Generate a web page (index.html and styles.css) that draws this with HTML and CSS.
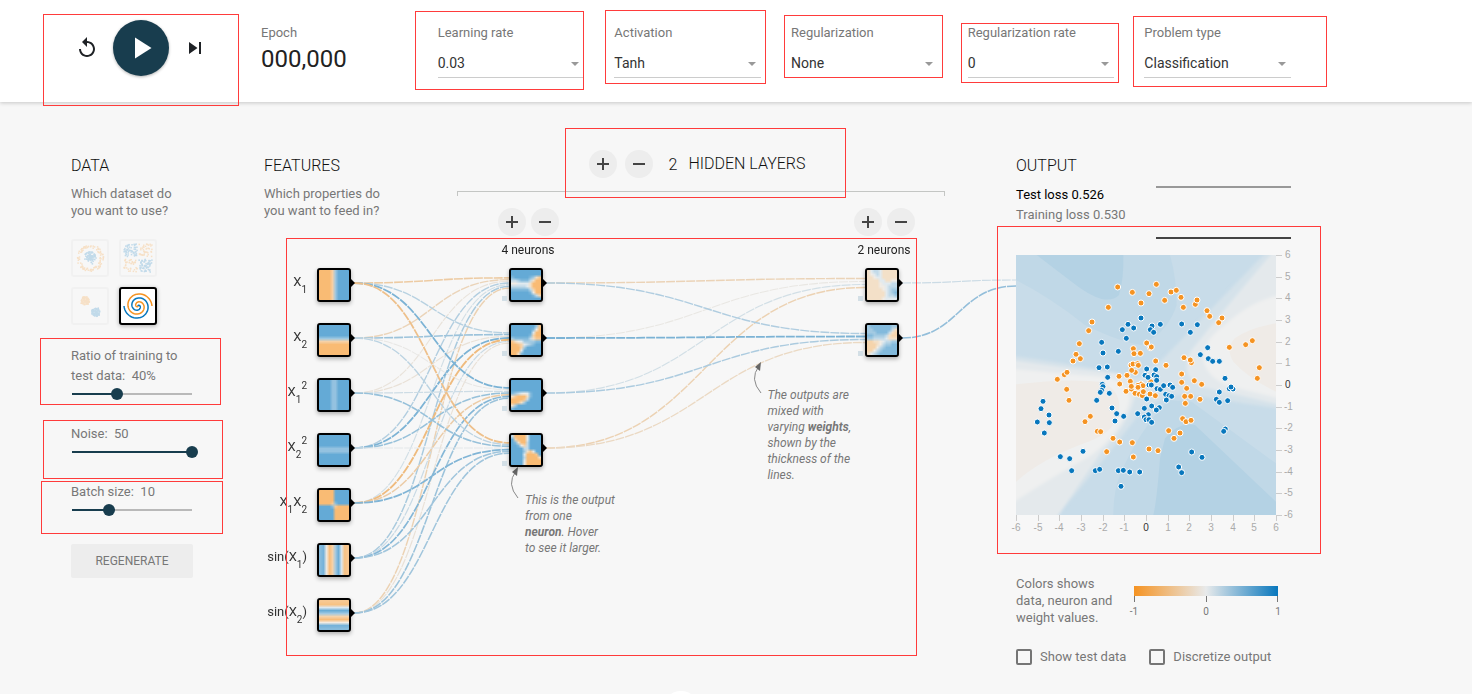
FILE: index.html
```html
<!DOCTYPE html>
<html lang="en">
<head>
    <meta charset="UTF-8">
    <meta name="viewport" content="width=device-width, initial-scale=1.0">
    <title>Neural Network Playground</title>
    <link rel="stylesheet" href="styles.css">
</head>
<body>
    <header class="top-bar">
        <div class="top-inner">
            <div class="controls">
                <button class="icon-btn" aria-label="Reset">
                    <svg width="24" height="24" viewBox="0 0 24 24"><path d="M12 5V1L7 6l5 5V7c3.31 0 6 2.69 6 6s-2.69 6-6 6-6-2.69-6-6H4c0 4.42 3.58 8 8 8s8-3.58 8-8-3.58-8-8-8z"/></svg>
                </button>
                <button class="play-btn" aria-label="Run">
                    <svg width="36" height="36" viewBox="0 0 24 24"><path d="M8 5v14l11-7z"/></svg>
                </button>
                <button class="icon-btn" aria-label="Step">
                    <svg width="24" height="24" viewBox="0 0 24 24"><path d="M6 18l8.5-6L6 6v12zM16 6v12h2V6h-2z"/></svg>
                </button>
                <span class="mark mark-controls"></span>
            </div>
            <div class="field">
                <span class="label">Epoch</span>
                <span class="epoch">000,000</span>
            </div>
            <div class="field">
                <label class="label" for="learningRate">Learning rate</label>
                <div class="select">
                    <select id="learningRate"><option>0.03</option><option>0.1</option><option>0.3</option></select>
                </div>
                <span class="mark mark-rate"></span>
            </div>
            <div class="field">
                <label class="label" for="activation">Activation</label>
                <div class="select">
                    <select id="activation"><option>Tanh</option><option>ReLU</option><option>Sigmoid</option></select>
                </div>
                <span class="mark mark-activation"></span>
            </div>
            <div class="field">
                <label class="label" for="regularization">Regularization</label>
                <div class="select">
                    <select id="regularization"><option>None</option><option>L1</option><option>L2</option></select>
                </div>
                <span class="mark mark-reg"></span>
            </div>
            <div class="field">
                <label class="label" for="regRate">Regularization rate</label>
                <div class="select">
                    <select id="regRate"><option>0</option><option>0.001</option><option>0.01</option></select>
                </div>
                <span class="mark mark-reg-rate"></span>
            </div>
            <div class="field">
                <label class="label" for="problem">Problem type</label>
                <div class="select">
                    <select id="problem"><option>Classification</option><option>Regression</option></select>
                </div>
                <span class="mark mark-problem"></span>
            </div>
        </div>
    </header>

    <main class="main">
        <section class="data">
            <h2>Data</h2>
            <p>Which dataset do you want to use?</p>
            <div class="datasets">
                <button class="dataset" aria-label="Circle"><svg id="setCircle" viewBox="0 0 34 34"></svg></button>
                <button class="dataset" aria-label="Exclusive or"><svg id="setXor" viewBox="0 0 34 34"></svg></button>
                <button class="dataset" aria-label="Gaussian"><svg id="setGauss" viewBox="0 0 34 34"></svg></button>
                <button class="dataset selected" aria-label="Spiral"><svg id="setSpiral" viewBox="0 0 34 34"></svg></button>
            </div>
            <div class="slider slider-ratio">
                <label for="ratio">Ratio of training to test data:&nbsp; 40%</label>
                <input type="range" id="ratio" min="10" max="90" step="10" value="40">
                <span class="mark mark-ratio"></span>
            </div>
            <div class="slider">
                <label for="noise">Noise:&nbsp; 50</label>
                <input type="range" id="noise" min="0" max="50" step="5" value="50">
                <span class="mark mark-noise"></span>
            </div>
            <div class="slider">
                <label for="batch">Batch size:&nbsp; 10</label>
                <input type="range" id="batch" min="1" max="30" value="10">
                <span class="mark mark-batch"></span>
            </div>
            <button class="regenerate">Regenerate</button>
        </section>

        <section class="model">
            <div class="model-head">
                <div class="features">
                    <h2>Features</h2>
                    <p>Which properties do you want to feed in?</p>
                </div>
                <div class="hidden-layers">
                    <div class="layers-title">
                        <button class="round-btn" aria-label="Add layer"><svg viewBox="0 0 28 28"><path d="M14 8v12M8 14h12"/></svg></button>
                        <button class="round-btn" aria-label="Remove layer"><svg viewBox="0 0 28 28"><path d="M8 14h12"/></svg></button>
                        <span class="layers-count">2</span>
                        <h2>Hidden layers</h2>
                        <span class="mark mark-layers"></span>
                    </div>
                    <div class="bracket"></div>
                </div>
            </div>
            <div class="network" id="network">
                <svg class="links" id="links"></svg>
                <div class="callout callout-neuron">
                    <svg width="16" height="34" viewBox="0 0 16 34"><path d="M9 32Q-3 18 7 5"/><path class="tip" d="M9 1L3 6l5 4z"/></svg>
                    This is the output<br>from one<br><b>neuron</b>. Hover<br>to see it larger.
                </div>
                <div class="callout callout-weight">
                    <svg width="16" height="34" viewBox="0 0 16 34"><path d="M9 32Q-3 18 7 5"/><path class="tip" d="M9 1L3 6l5 4z"/></svg>
                    The outputs are<br>mixed with<br>varying <b>weights</b>,<br>shown by the<br>thickness of the<br>lines.
                </div>
                <span class="mark mark-network"></span>
            </div>
        </section>

        <section class="output">
            <h2>Output</h2>
            <div class="loss">
                <div class="loss-text">
                    <div>Test loss 0.526</div>
                    <div class="train">Training loss 0.530</div>
                </div>
                <div class="loss-chart"></div>
            </div>
            <div class="plot">
                <svg id="plot" width="275" height="282" viewBox="0 0 275 282">
                    <svg id="heat" width="260" height="260" viewBox="33 30 780 780">
                        <defs>
                            <filter id="soft" x="-5%" y="-5%" width="110%" height="110%"><feGaussianBlur stdDeviation="5"/></filter>
                        </defs>
                        <rect x="33" y="30" width="780" height="780" fill="#c8dce9"/>
                        <path fill="#c0d8e7" d="M33 30H495Q515 100 515 180Q490 260 410 300Q340 290 240 240Q140 160 33 105z"/>
                        <path fill="#b4d2e4" d="M95 30H355Q357 100 342 150Q325 168 290 162Q250 150 200 110z"/>
                        <path fill="#c0d8e7" d="M325 810Q325 740 345 690Q400 560 490 465L560 470L813 655V810z"/>
                        <path fill="#b4d2e4" d="M445 810Q455 770 465 640L480 580Q520 530 570 540L813 770V810z"/>
                        <g filter="url(#soft)">
                            <path fill="#d5e2ea" d="M785 20L470 345L400 400Q300 370 20 332V820H148Q280 670 400 510Q480 440 560 450Q680 470 830 492V20z"/>
                            <path fill="#e4e9ec" d="M805 20Q660 190 560 315Q520 390 590 425Q700 450 830 480V20z"/>
                            <path fill="#eff0f0" d="M830 150Q740 165 660 240Q590 290 595 345Q610 410 700 430L830 462z"/>
                            <path fill="#e4e9ec" d="M20 345Q200 372 330 385Q400 410 390 450Q370 540 290 620Q220 720 155 820H20z"/>
                            <path fill="#eff0f0" d="M20 372Q200 388 310 398Q380 420 372 470Q350 560 260 630Q150 690 20 775z"/>
                        </g>
                        <path fill="#efebe7" d="M813 235Q730 250 690 280Q660 310 685 350Q730 400 813 440z"/>
                        <path fill="#efebe7" d="M33 418Q200 398 290 412Q345 435 343 490Q335 560 250 590Q110 640 33 710z"/>
                    </svg>
                </svg>
                <span class="mark mark-plot"></span>
            </div>
            <div class="legend">
                <p>Colors shows data, neuron and weight values.</p>
                <div class="scale">
                    <div class="scale-bar"></div>
                    <div class="scale-ticks"><i></i><i></i><i></i></div>
                    <div class="scale-labels"><span>-1</span><span>0</span><span>1</span></div>
                </div>
            </div>
            <div class="options">
                <label><input type="checkbox">Show test data</label>
                <label><input type="checkbox">Discretize output</label>
            </div>
        </section>
        <button class="more" aria-label="Read more"></button>
    </main>

    <script src="script.js"></script>
</body>
</html>
```
FILE: styles.css
```css
* {
    box-sizing: border-box;
}

body {
    margin: 0;
    min-height: 100vh;
    display: flex;
    flex-direction: column;
    font-family: Roboto, "Liberation Sans", sans-serif;
    font-size: 13px;
    line-height: 17px;
    color: #777;
    background: #f7f7f7;
}

h2, p {
    margin: 0;
}

h2 {
    font-size: 16px;
    font-weight: 300;
    line-height: 20px;
    color: #111;
    text-transform: uppercase;
}

button, select, input {
    font-family: inherit;
    margin: 0;
}

button {
    border: none;
    padding: 0;
    cursor: pointer;
}

button svg {
    display: block;
}

/* red outlines drawn over the page */
.mark {
    position: absolute;
    z-index: 5;
    border: 1px solid #ff3b3b;
    pointer-events: none;
}

.mark-controls { left: -28px; top: -6px; width: 196px; height: 92px; }
.mark-rate { left: -23px; top: -9px; width: 169px; height: 79px; }
.mark-activation { left: -9px; top: -10px; width: 161px; height: 74px; }
.mark-reg { left: -7px; top: -5px; width: 159px; height: 63px; }
.mark-reg-rate { left: -7px; top: 3px; width: 158px; height: 60px; }
.mark-problem { left: -11px; top: -4px; width: 194px; height: 71px; }
.mark-ratio { left: -31px; top: -8px; width: 181px; height: 67px; }
.mark-noise { left: -28px; top: -4px; width: 180px; height: 59px; }
.mark-batch { left: -30px; top: -1px; width: 182px; height: 53px; }
.mark-layers { left: 108px; top: -28px; width: 281px; height: 70px; }
.mark-network { left: 22px; top: 30px; width: 631px; height: 418px; }
.mark-plot { left: -19px; top: -29px; width: 324px; height: 328px; }

/* top bar */
.top-bar {
    position: relative;
    z-index: 1;
    height: 102px;
    padding: 20px 181px 0 71px;
    background: #fff;
    box-shadow: 0 1px 4px rgba(0, 0, 0, 0.2);
}

.top-inner {
    display: flex;
    gap: 30px;
}

.controls {
    position: relative;
    flex: none;
    width: 160px;
    height: 56px;
    padding-left: 4px;
    display: flex;
    align-items: center;
    gap: 14px;
}

.icon-btn {
    background: none;
    fill: #1f2226;
}

.play-btn {
    width: 56px;
    height: 56px;
    padding: 10px;
    border-radius: 50%;
    background: #183d4e;
    fill: #fff;
    box-shadow: 0 1px 3px rgba(0, 0, 0, 0.3);
}

.field {
    position: relative;
    flex: 1;
    min-width: 0;
    padding-top: 5px;
}

.label {
    display: block;
    line-height: 16px;
}

.epoch {
    display: block;
    margin-top: 3px;
    font-size: 24px;
    line-height: 30px;
    color: #222;
}

.select {
    position: relative;
    margin-top: 7px;
}

.select select {
    display: block;
    width: 100%;
    height: 30px;
    padding: 0;
    border: none;
    border-bottom: 1px solid #ccc;
    background: none;
    appearance: none;
    font-size: 14px;
    color: #333;
}

.select::after {
    content: "";
    position: absolute;
    right: 5px;
    top: 14px;
    border: 4px solid transparent;
    border-top-color: #999;
}

/* columns */
.main {
    position: relative;
    flex: 1;
    display: grid;
    grid-template-columns: 122px minmax(0, 1fr) 275px;
    gap: 71px;
    padding: 54px 181px 0 71px;
    overflow: hidden;
}

.data h2, .features h2, .output h2 {
    margin-bottom: 9px;
}

.data p {
    width: 110px;
}

.datasets {
    display: grid;
    grid-template-columns: 38px 38px;
    gap: 10px;
    margin-top: 20px;
}

.dataset {
    width: 38px;
    height: 38px;
    border: 2px solid #ddd;
    border-radius: 3px;
    background: none;
    opacity: 0.22;
}

.dataset.selected {
    border-color: #000;
    background: #fff;
    opacity: 1;
    box-shadow: 0 1px 4px rgba(0, 0, 0, 0.3);
}

.slider {
    position: relative;
    height: 58px;
    line-height: 20px;
}

.slider-ratio {
    height: 78px;
    margin-top: 21px;
}

.slider label {
    display: block;
    width: 122px;
}

.slider input {
    display: block;
    width: 132px;
    height: 16px;
    margin-left: -5px;
    appearance: none;
    background: linear-gradient(#183d4e, #183d4e) 6px 7px / calc(var(--fill) * 120px) 2px no-repeat,
        linear-gradient(#b9b9b9, #b9b9b9) 6px 7px / 120px 2px no-repeat;
}

.slider input::-webkit-slider-thumb {
    appearance: none;
    width: 12px;
    height: 12px;
    border-radius: 50%;
    background: #183d4e;
}

.regenerate {
    width: 122px;
    height: 34px;
    margin-top: 4px;
    border-radius: 2px;
    background: #ededed;
    color: #777;
    font-size: 12px;
    text-transform: uppercase;
}

/* network */
.model-head {
    display: flex;
    height: 52px;
}

.features {
    flex: none;
    width: 193px;
}

.features p {
    width: 130px;
}

.hidden-layers {
    flex: 1;
}

.layers-title {
    position: relative;
    display: flex;
    justify-content: center;
    align-items: center;
    gap: 8px;
    height: 16px;
    padding-right: 8px;
}

.layers-count {
    margin: 0 3px 0 8px;
    font-size: 16px;
    font-weight: 300;
    color: #111;
}

.round-btn {
    width: 28px;
    height: 28px;
    border-radius: 50%;
    background: #ededed;
    stroke: #444;
    stroke-width: 2;
}

.bracket {
    height: 5px;
    margin-top: 19px;
    border: 1px solid #c4c6c4;
    border-bottom: none;
}

.network {
    position: relative;
    height: 448px;
}

.links {
    position: absolute;
    left: 0;
    top: 0;
    width: 100%;
    height: 100%;
    overflow: visible;
    fill: none;
}

.node {
    position: absolute;
    width: 34px;
    height: 34px;
    border: 2px solid #000;
    border-radius: 3px;
    background: #fff;
    box-shadow: 0 2px 4px rgba(0, 0, 0, 0.3);
}

.node canvas {
    display: block;
    width: 30px;
    height: 30px;
}

.node::after {
    content: "";
    position: absolute;
    left: 31px;
    top: 8px;
    border: 5px solid transparent;
    border-left-color: #000;
    border-right: none;
}

.bias {
    position: absolute;
    width: 5px;
    height: 5px;
    background: #d3dfe6;
}

.node-label {
    position: absolute;
    width: 60px;
    display: flex;
    justify-content: flex-end;
    font-size: 13px;
    line-height: 16px;
    color: #333;
    white-space: pre;
}

.node-label sub, .node-label sup {
    font-size: 10px;
    line-height: 16px;
    vertical-align: baseline;
}

.node-label sub {
    padding-top: 8px;
}

.node-label sup {
    margin-top: -6px;
}

.layer-head {
    position: absolute;
    width: 80px;
    display: flex;
    flex-wrap: wrap;
    justify-content: center;
    gap: 5px;
    font-size: 12px;
    text-align: center;
    color: #222;
}

.layer-head span {
    width: 100%;
    line-height: 18px;
}

.callout {
    position: absolute;
    font-size: 12px;
    font-style: italic;
    line-height: 16px;
    white-space: nowrap;
}

.callout svg {
    position: absolute;
    left: -16px;
    top: -26px;
    fill: none;
    stroke: #888;
}

.callout .tip {
    fill: #666;
    stroke: none;
}

.callout-neuron { left: 261px; top: 284px; }
.callout-weight { right: 94px; top: 179px; }

/* output */
.loss {
    display: flex;
    justify-content: space-between;
    height: 70px;
}

.loss-text {
    line-height: 20px;
    color: #000;
}

.loss-text .train {
    color: #777;
}

.loss-chart {
    width: 135px;
    height: 53px;
    margin-top: 1px;
    border-top: 2px solid #999;
    border-bottom: 2px solid #444;
}

.plot {
    position: relative;
}

.plot > svg {
    display: block;
    overflow: visible;
}

.plot text {
    font-family: "Liberation Sans", sans-serif;
    font-size: 10px;
    fill: #aaa;
}

.plot .zero {
    fill: #333;
}

.plot line {
    stroke: #ccc;
}

.legend {
    display: flex;
    justify-content: space-between;
    margin-top: 38px;
    padding-right: 8px;
}

.legend p {
    width: 102px;
}

.scale {
    width: 154px;
    margin-top: 11px;
}

.scale-bar {
    height: 10px;
    margin: 0 5px;
    background: linear-gradient(to right, #f59322, #e8eaeb, #0877bd);
}

.scale-ticks {
    display: flex;
    justify-content: space-between;
    height: 6px;
    margin: 0 5px;
}

.scale-ticks i {
    width: 1px;
    background: #777;
}

.scale-labels {
    display: flex;
    justify-content: space-between;
    font-size: 10px;
    line-height: 20px;
}

.scale-labels span {
    width: 10px;
    text-align: center;
}

.options {
    display: flex;
    gap: 23px;
    margin-top: 22px;
}

.options label {
    display: flex;
    align-items: center;
    gap: 8px;
    white-space: nowrap;
}

.options input {
    appearance: none;
    width: 16px;
    height: 16px;
    border: 2px solid #757575;
    border-radius: 2px;
}

.more {
    position: absolute;
    left: calc(50% - 73px);
    top: 589px;
    width: 36px;
    height: 36px;
    border-radius: 50%;
    background: #fff;
}
```
FILE: script.js
```js
const SVG = 'http://www.w3.org/2000/svg';

function add(parent, name, attrs, text) {
    const el = document.createElementNS(SVG, name);
    for (const key in attrs) el.setAttribute(key, attrs[key]);
    if (text !== undefined) el.textContent = text;
    parent.appendChild(el);
    return el;
}

// orange (-1) -> grey (0) -> blue (1)
function color(v) {
    v = Math.max(-1, Math.min(1, v));
    const end = v < 0 ? [245, 147, 34] : [8, 119, 189];
    const mid = [232, 234, 235];
    return mid.map((c, i) => Math.round(c + (end[i] - c) * Math.abs(v)));
}

// sliders
document.querySelectorAll('.slider input').forEach(input => {
    const update = () => input.style.setProperty('--fill', (input.value - input.min) / (input.max - input.min));
    input.addEventListener('input', update);
    update();
});

// dataset thumbnails
let seed = 7;
function rand() {
    seed = (seed * 16807) % 2147483647;
    return seed / 2147483647;
}

function dot(id, x, y, fill) {
    add(document.getElementById(id), 'rect', { x: x - 0.7, y: y - 0.7, width: 1.5, height: 1.5, fill: fill });
}

const BLUE = '#0877bd';
const ORANGE = '#f59322';

for (let i = 0; i < 100; i++) {
    let a = rand() * 2 * Math.PI;
    let r = rand() * 6.5;
    dot('setCircle', 17 + r * Math.cos(a), 17 + r * Math.sin(a), BLUE);
    a = rand() * 2 * Math.PI;
    r = 10 + rand() * 3.5;
    dot('setCircle', 17 + r * Math.cos(a), 17 + r * Math.sin(a), ORANGE);
}
for (let i = 0; i < 200; i++) {
    const x = rand() * 26 - 13;
    const y = rand() * 26 - 13;
    dot('setXor', 17 + x + Math.sign(x), 17 + y + Math.sign(y), x * y > 0 ? BLUE : ORANGE);
}
for (let i = 0; i < 90; i++) {
    const a = rand() * 2 * Math.PI;
    const r = Math.sqrt(rand()) * 4.5;
    dot('setGauss', 12 + r * Math.cos(a), 12 + r * Math.sin(a), ORANGE);
    dot('setGauss', 23 + r * Math.sin(a), 23 + r * Math.cos(a), BLUE);
}
[[0, BLUE], [Math.PI, ORANGE]].forEach(([delta, stroke]) => {
    let d = 'M17 17';
    for (let i = 1; i <= 80; i++) {
        const r = i / 80 * 14;
        const t = 1.75 * i / 80 * 2 * Math.PI + delta;
        d += 'L' + (17 + r * Math.sin(t)).toFixed(2) + ' ' + (17 - r * Math.cos(t)).toFixed(2);
    }
    add(document.getElementById('setSpiral'), 'path', { d: d, fill: 'none', stroke: stroke, 'stroke-width': 1.5 });
});

// network
const network = document.getElementById('network');
const links = document.getElementById('links');

const features = [
    { label: 'X<sub>1</sub>', f: (x, y) => x },
    { label: 'X<sub>2</sub>', f: (x, y) => y },
    { label: 'X<sub>1</sub><sup>2</sup>', f: (x, y) => 0.3 + x * x },
    { label: 'X<sub>2</sub><sup>2</sup>', f: (x, y) => 0.3 + y * y },
    { label: 'X<sub>1</sub>X<sub>2</sub>', f: (x, y) => x * y * 2 },
    { label: 'sin(X<sub>1</sub>)', f: (x, y) => Math.sin(x) },
    { label: 'sin(X<sub>2</sub>)', f: (x, y) => Math.sin(y) }
];

// neuron outputs sampled on a 10x10 grid, 0 = -1 and 9 = 1
const hidden = [
    [
        '9999999999 9999999999 8999998731 6678886300 4455553000 6666653000 8888886200 9999998400 9999999862 9999999999',
        '9999999971 9999999840 9999999500 9999998200 7888886311 1345777788 0012567899 0002799999 0005999999 0038999999',
        '9999999999 9999999999 9999999999 9999999999 8765458999 3100038999 0000169999 0013799999 3799999999 8999999999',
        '6000059999 9200059999 9830069999 9984269999 9999669999 9999731599 9999500019 9999600003 9999500000 9999400000'
    ],
    [
        '3566533333 3456533333 3345533333 3333553344 3333455566 3333445666 3333345677 3333335678 3333335667 3333345555',
        '7888888877 7788888863 7778888632 8877776322 7766665333 2233456677 2223467788 2224678888 2246788888 3567888888'
    ]
];

// weights[layer][target][source]
const weights = [
    [
        [-0.36, -0.25, -0.08, 0.24, 0.1, 0.28, -0.28],
        [0.22, 0.34, -0.1, 0.48, -0.54, 0.14, -0.1],
        [0.48, -0.03, 0.12, 0.36, -0.34, 0.44, 0.34],
        [-0.48, 0.2, 0.36, 0.02, 0.46, 0.32, 0.32]
    ],
    [
        [-0.26, -0.04, 0.1, -0.28],
        [0.25, 0.48, 0.27, -0.2]
    ],
    [
        [0.13, 0.38]
    ]
];

function heatmap(size, value) {
    const canvas = document.createElement('canvas');
    canvas.width = canvas.height = size;
    const ctx = canvas.getContext('2d');
    const image = ctx.createImageData(size, size);
    for (let y = 0; y < size; y++) {
        for (let x = 0; x < size; x++) {
            image.data.set([...color(value(x, y)), 160], (y * size + x) * 4);
        }
    }
    ctx.putImageData(image, 0, 0);
    return canvas;
}

function place(className, x, y, html) {
    const el = document.createElement('div');
    el.className = className;
    el.style.left = x + 'px';
    el.style.top = y + 'px';
    el.innerHTML = html || '';
    network.appendChild(el);
    return el;
}

function link(x0, y0, x1, y1, w) {
    const mid = (x0 + x1) / 2;
    add(links, 'path', {
        d: `M${x0} ${y0}C${mid} ${y0} ${mid} ${y1} ${x1} ${y1}`,
        stroke: `rgb(${color(w)})`,
        'stroke-width': 1 + 1.6 * Math.abs(w),
        'stroke-dasharray': '9 1'
    });
}

const width = network.clientWidth;
const layerX = [70, 262, width - 63, width + 88];
const nodeY = i => 77 + i * 55;

weights.forEach((layer, l) => layer.forEach((sources, t) => sources.forEach((w, s) => {
    const n = sources.length;
    link(layerX[l] + 20, nodeY(s) - 2, layerX[l + 1] - 17, nodeY(t) - 2 + (s - (n - 1) / 2) / n * 12, w);
})));

features.forEach((feature, i) => {
    const node = place('node', layerX[0] - 17, nodeY(i) - 17);
    node.appendChild(heatmap(10, (x, y) => feature.f((x - 4.5) / 0.83, (4.5 - y) / 0.83)));
    place('node-label', -17, nodeY(i) - 11, feature.label);
});

const button = path => `<button class="round-btn" aria-label="Neurons"><svg viewBox="0 0 28 28"><path d="${path}"/></svg></button>`;

hidden.forEach((layer, l) => {
    const cx = layerX[l + 1];
    layer.forEach((grid, i) => {
        const rows = grid.split(' ');
        const node = place('node', cx - 17, nodeY(i) - 17);
        node.appendChild(heatmap(10, (x, y) => rows[y][x] / 4.5 - 1));
        place('bias', cx - 24, nodeY(i) + 11);
    });
    place('layer-head', cx - 38, 0, button('M14 8v12M8 14h12') + button('M8 14h12') + `<span>${layer.length} neurons</span>`);
});

// output plot
const plot = document.getElementById('plot');
const heat = document.getElementById('heat');

for (let v = -6; v <= 6; v++) {
    const pos = Math.round((v + 6) * 260 / 12);
    const zero = v === 0 ? 'zero' : '';
    add(plot, 'line', { x1: pos + 0.5, y1: 260, x2: pos + 0.5, y2: 266 });
    add(plot, 'text', { x: pos, y: 276, 'text-anchor': 'middle', class: zero }, v);
    add(plot, 'line', { x1: 260, y1: 260.5 - pos, x2: 266, y2: 260.5 - pos });
    add(plot, 'text', { x: v < 0 ? 268 : 269, y: 263 - pos, class: zero }, v);
}

const orange = [
    [338,126],[382,142],[432,146],[454,118],[408,174],[310,187],[261,231],[251,257],[223,296],[213,328],[204,348],[226,341],
    [498,141],[514,136],[528,157],[479,166],[535,187],[571,178],[576,165],[606,197],[614,214],[651,219],[641,233],
    [673,307],[722,299],[742,287],[763,368],[757,400],[157,403],[178,389],[186,382],[185,433],[192,466],
    [425,294],[436,308],[439,306],[385,311],[387,326],[406,325],[452,348],[483,361],[537,338],[559,353],[556,345],
    [378,360],[384,357],[398,356],[400,361],[391,382],[380,376],[366,391],[342,394],[344,417],[376,409],[363,439],[379,432],
    [379,424],[390,445],[403,448],[412,452],[415,440],[408,417],[399,421],[414,422],[437,410],[399,427],[435,447],[451,452],
    [530,387],[530,412],[568,407],[590,418],[545,430],[539,454],[557,454],[541,475],[585,463],
    [256,514],[240,530],[277,559],[287,560],[324,580],[344,591],[382,593],[305,620],[385,636],[432,612],[459,617],
    [491,557],[525,564],[507,580],[533,521],[543,530],[558,526]
];
const blue = [
    [408,219],[369,238],[386,249],[352,254],[364,280],[340,319],[290,292],[294,324],[282,368],[307,366],[308,397],
    [441,243],[436,254],[446,262],[466,238],[530,237],[577,239],[556,262],[608,308],[586,329],[610,341],[623,349],[643,349],
    [660,400],[643,441],[634,463],[643,472],[668,467],[673,431],[684,432],[678,426],[661,552],[656,559],
    [425,372],[452,374],[420,391],[429,397],[447,390],[455,395],[455,406],[432,420],[439,420],[456,431],[466,433],[476,422],
    [495,420],[503,427],[482,448],[492,452],[500,454],[484,465],[425,462],[440,483],[463,488],[454,495],[418,490],[398,506],
    [430,509],[418,516],[423,524],[432,524],[440,532],[356,514],[335,506],[330,528],[321,489],[313,445],[292,418],[294,425],
    [290,436],[286,442],[275,466],[114,469],[108,491],[97,531],[132,510],[133,533],[118,564],[166,635],[194,641],[234,619],
    [200,677],[271,677],[284,673],[340,677],[355,676],[374,681],[404,681],[348,724],[521,666],[530,683],[560,621],[591,637]
];

[[orange, ORANGE], [blue, BLUE]].forEach(([points, fill]) => points.forEach(([cx, cy]) => {
    add(heat, 'circle', { cx: cx, cy: cy, r: 9, fill: fill, stroke: '#fff', 'stroke-width': 3 });
}));
```
